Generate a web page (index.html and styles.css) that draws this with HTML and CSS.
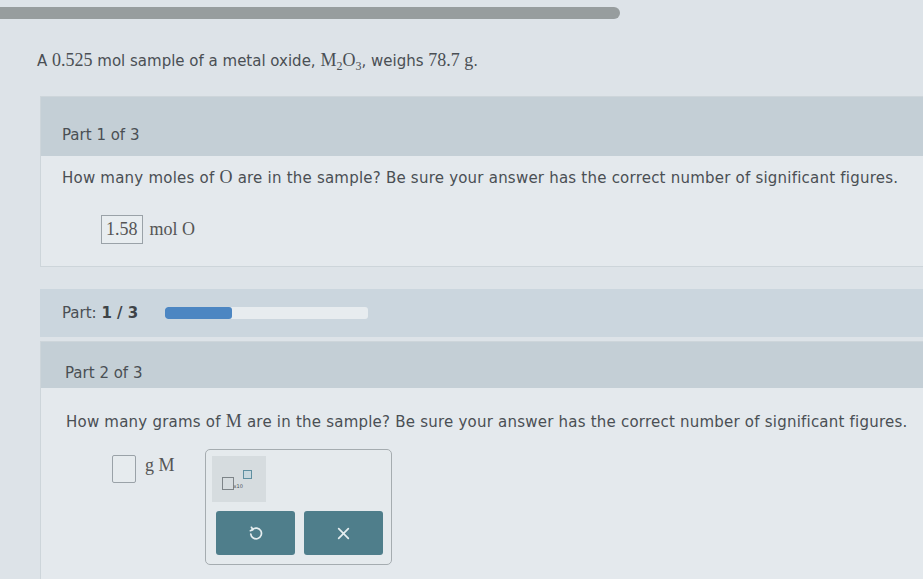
FILE: index.html
```html
<!DOCTYPE html>
<html>
<head>
<meta charset="utf-8">
<link rel="stylesheet" href="styles.css">
</head>
<body>
<div class="topbar"></div>
<p class="intro">A <span class="num">0.525</span> mol sample of a metal oxide, <span class="num">M<sub>2</sub>O<sub>3</sub></span>, weighs <span class="num">78.7 g</span>.</p>

<section class="card card1">
  <div class="card-head">Part 1 of 3</div>
  <div class="card-body">
    <p class="question">How many moles of <span class="num">O</span> are in the sample? Be sure your answer has the correct number of significant figures.</p>
    <div class="answer-row">
      <span class="answer-box">1.58</span>
      <span class="unit">mol O</span>
    </div>
  </div>
</section>

<div class="progress">
  <span class="progress-label">Part: <b>1 / 3</b></span>
  <div class="track"><div class="fill" style="width:33%"></div></div>
</div>

<section class="card card2">
  <div class="card-head">Part 2 of 3</div>
  <div class="card-body">
    <p class="question">How many grams of <span class="num">M</span> are in the sample? Be sure your answer has the correct number of significant figures.</p>
    <div class="answer-row2">
      <span class="empty-box"></span>
      <span class="unit">g M</span>
      <div class="palette">
        <div class="sci-btn">
          <span class="sq"></span><span class="x10">x10</span><span class="sq small"></span>
        </div>
        <div class="btn-row">
          <button class="btn">
            <svg width="15" height="15" viewBox="0 0 14 14"><path d="M4.2 3.2 A5 5 0 1 1 2.6 7.5" fill="none" stroke="#e6eef0" stroke-width="1.6" stroke-linecap="round"/><path d="M3.2 1.2 L4.6 3.4 L2.2 4.4" fill="none" stroke="#e6eef0" stroke-width="1.6" stroke-linecap="round" stroke-linejoin="round"/></svg>
          </button>
          <button class="btn">
            <svg width="15" height="15" viewBox="0 0 14 14"><path d="M2.5 2.5 L11.5 11.5 M11.5 2.5 L2.5 11.5" stroke="#e6eef0" stroke-width="1.6" stroke-linecap="round"/></svg>
          </button>
        </div>
      </div>
    </div>
  </div>
</section>
</body>
</html>
```
FILE: styles.css
```css
html, body {
  margin: 0;
  padding: 0;
}
body {
  background: #dde3e8;
  font-family: "DejaVu Sans", Verdana, sans-serif;
  font-size: 15px;
  color: #4a4f54;
  width: 923px;
  height: 579px;
  overflow: hidden;
}
.topbar {
  margin-top: 7px;
  width: 620px;
  height: 12px;
  background: #979d9e;
  border-radius: 0 6px 6px 0;
}
.intro {
  margin: 31px 0 0 37px;
  line-height: 20px;
}
.num {
  font-family: "Liberation Serif", "Times New Roman", serif;
  font-size: 18px;
}
.num sub {
  font-size: 12px;
  vertical-align: -4px;
}

.card {
  margin-left: 40px;
  background: #e4e9ed;
  border: 1px solid #cdd5da;
  border-right: none;
}
.card1 { margin-top: 20px; }
.card-head {
  background: #c4cfd6;
  padding: 29px 0 12px 21px;
  line-height: 18px;
}
.card1 .card-body {
  padding: 0 0 22px 21px;
}
.question {
  margin: 0;
  padding-top: 10px;
  line-height: 22px;
  letter-spacing: 0.22px;
}
.answer-row {
  display: flex;
  align-items: center;
  margin: 26px 0 0 39px;
}
.answer-box {
  border: 1px solid #9aa2a8;
  background: #e8edf0;
  padding: 3px 4px;
  font-family: "Liberation Serif", serif;
  font-size: 18px;
  line-height: 21px;
  color: #555;
}
.unit {
  font-family: "Liberation Serif", serif;
  font-size: 18px;
  color: #555;
  margin-left: 7px;
}

.progress {
  margin: 22px 0 0 40px;
  height: 48px;
  background: #cbd6de;
  display: flex;
  align-items: center;
  padding-left: 22px;
}
.progress-label {
  width: 103px;
}
.progress-label b { color: #3f4448; }
.track {
  width: 203px;
  height: 12px;
  background: #e7ecef;
  border-radius: 3px;
  overflow: hidden;
}
.fill {
  height: 100%;
  background: #4c86c2;
  border-radius: 3px;
}

.card2 {
  margin-top: 4px;
  height: 260px;
}
.card2 .card-head {
  padding: 22px 0 6px 24px;
}
.card2 .card-body {
  padding: 0 0 0 25px;
}
.card2 .question {
  padding-top: 22px;
}
.answer-row2 {
  display: flex;
  align-items: flex-start;
  margin: 16px 0 0 46px;
}
.empty-box {
  width: 22px;
  height: 26px;
  border: 1px solid #9aa2a8;
  border-radius: 2px;
  background: #e6ebee;
  margin-top: 6px;
}
.answer-row2 .unit {
  margin-left: 9px;
  margin-top: 6px;
}
.palette {
  margin-left: 30px;
  width: 187px;
  height: 116px;
  border: 1px solid #a5acb0;
  border-radius: 5px;
  background: #e5eaed;
  box-sizing: border-box;
  padding: 6px 0 0 6px;
}
.sci-btn {
  width: 54px;
  height: 46px;
  background: #d6dcdf;
  display: flex;
  align-items: center;
  padding-left: 10px;
  box-sizing: border-box;
}
.sq {
  width: 10px;
  height: 11px;
  border: 1px solid #7d8488;
  margin-top: 8px;
}
.sq.small {
  width: 7px;
  height: 7px;
  margin-top: -10px;
  border-color: #5f8fa0;
  background: #c9d8de;
}
.x10 {
  font-size: 5px;
  margin-top: 14px;
}
.btn-row {
  display: flex;
  gap: 9px;
  margin: 9px 0 0 4px;
}
.btn {
  width: 79px;
  height: 44px;
  border: none;
  border-radius: 3px;
  background: #4f7e8b;
  display: flex;
  align-items: center;
  justify-content: center;
  padding: 0;
}
```
